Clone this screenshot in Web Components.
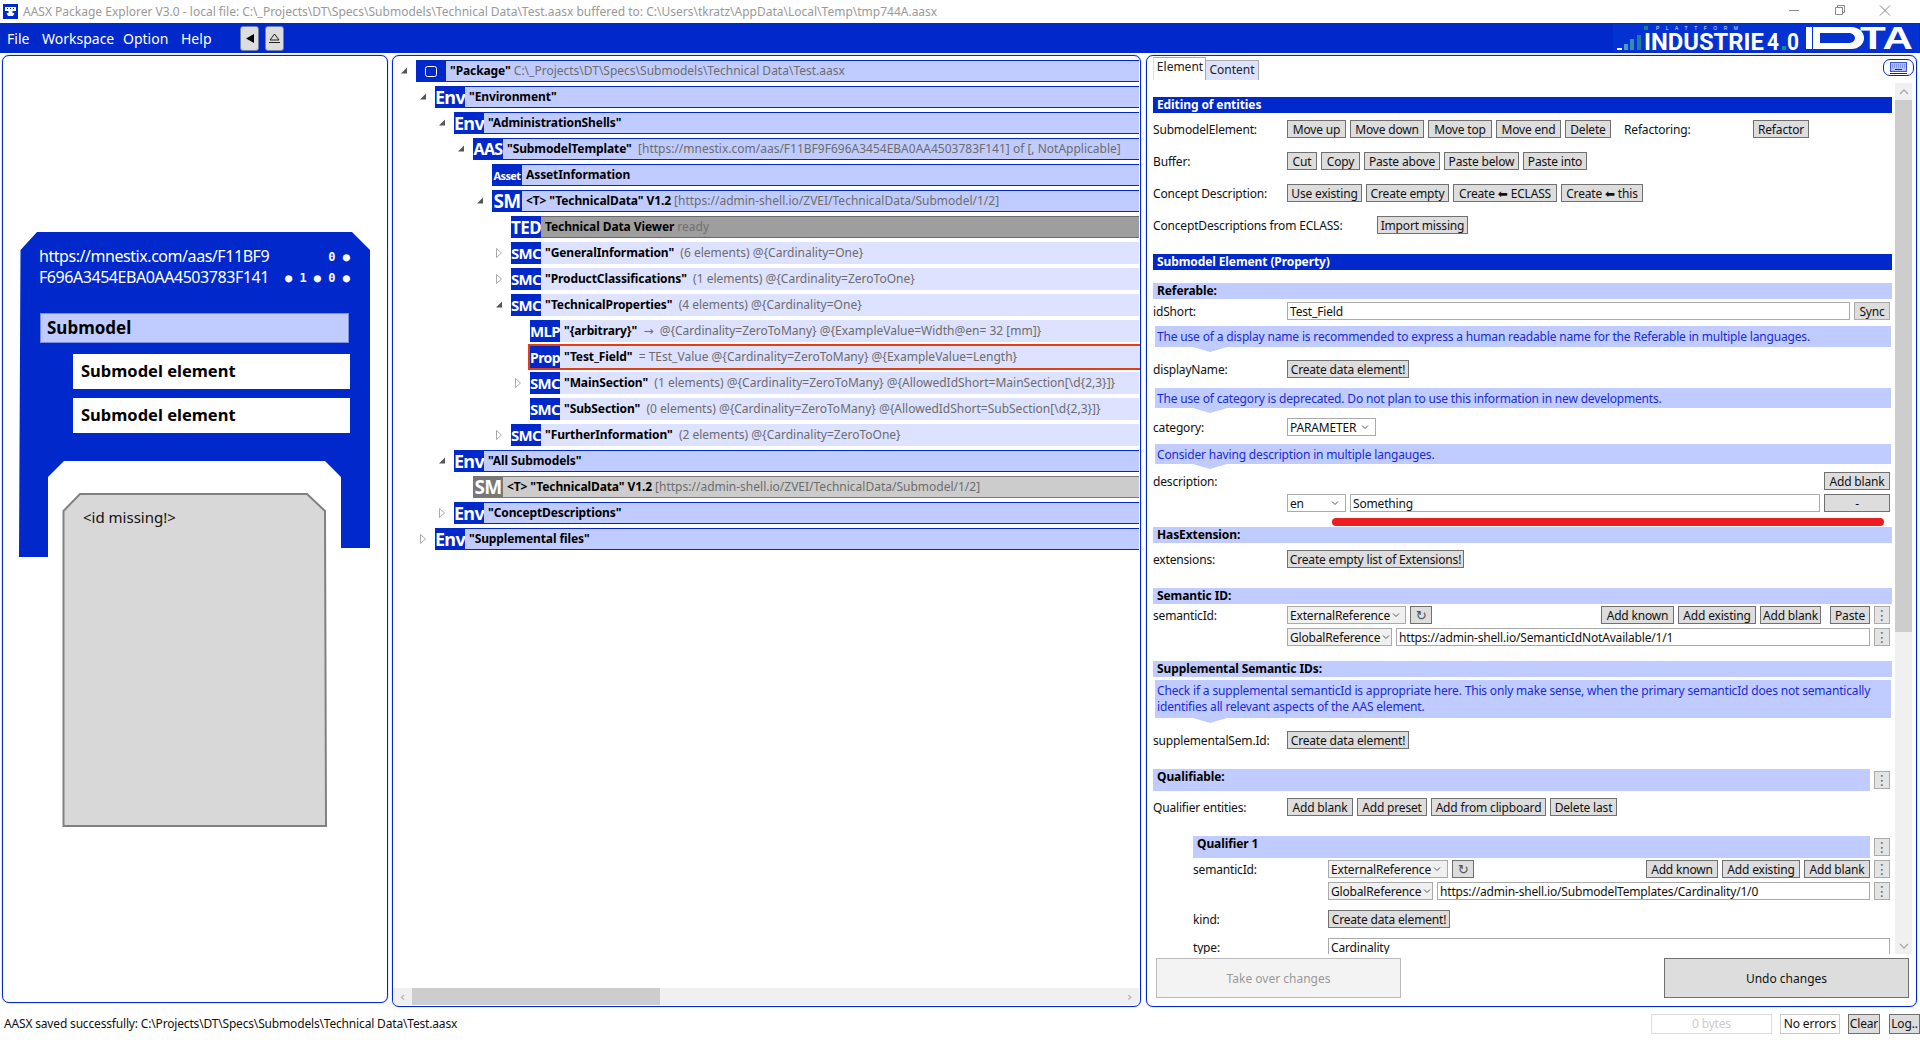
<!DOCTYPE html>
<html><head><meta charset="utf-8"><title>AASX Package Explorer</title>
<style>
html,body{margin:0;padding:0;height:1040px;overflow:hidden;background:#fff;}
body{font:12px "Noto Sans","DejaVu Sans",sans-serif;color:#111;}
</style></head><body>
<aas-app>
  <aas-titlebar slot="title">AASX Package Explorer V3.0 - local file: C:\_Projects\DT\Specs\Submodels\Technical Data\Test.aasx buffered to: C:\Users\tkratz\AppData\Local\Temp\tmp744A.aasx</aas-titlebar>
  <aas-menubar slot="menu"></aas-menubar>
  <aas-left slot="left"></aas-left>
  <aas-tree slot="mid">
    <tree-row level="0" icon="pkg" toggle="open"><b>"Package"</b> <span>C:\_Projects\DT\Specs\Submodels\Technical Data\Test.aasx</span></tree-row>
    <tree-row level="1" icon="Env" size="18" toggle="open"><b>"Environment"</b></tree-row>
    <tree-row level="2" icon="Env" size="18" toggle="open"><b>"AdministrationShells"</b></tree-row>
    <tree-row level="3" icon="AAS" size="16" toggle="open"><b>"SubmodelTemplate"</b> &nbsp;<span>[https://mnestix.com/aas/F11BF9F696A3454EBA0AA4503783F141] of [, NotApplicable]</span></tree-row>
    <tree-row level="4" icon="Asset" size="11"><b>AssetInformation</b></tree-row>
    <tree-row level="4" icon="SM" size="19" toggle="open"><b>&lt;T&gt; "TechnicalData" V1.2</b> <span>[https://admin-shell.io/ZVEI/TechnicalData/Submodel/1/2]</span></tree-row>
    <tree-row level="5" icon="TED" size="17" kind="gray"><b>Technical Data Viewer</b> <span>ready</span></tree-row>
    <tree-row level="5" icon="SMC" size="15" kind="light" toggle="closed"><b>"GeneralInformation"</b> &nbsp;<span>(6 elements) @{Cardinality=One}</span></tree-row>
    <tree-row level="5" icon="SMC" size="15" kind="light" toggle="closed"><b>"ProductClassifications"</b> &nbsp;<span>(1 elements) @{Cardinality=ZeroToOne}</span></tree-row>
    <tree-row level="5" icon="SMC" size="15" kind="light" toggle="open"><b>"TechnicalProperties"</b> &nbsp;<span>(4 elements) @{Cardinality=One}</span></tree-row>
    <tree-row level="6" icon="MLP" size="15" kind="light"><b>"{arbitrary}"</b> &nbsp;<span>→ &nbsp;@{Cardinality=ZeroToMany} @{ExampleValue=Width@en= 32 [mm]}</span></tree-row>
    <tree-row level="6" icon="Prop" size="14" kind="light" selected><b>"Test_Field"</b> &nbsp;<span>= TEst_Value @{Cardinality=ZeroToMany} @{ExampleValue=Length}</span></tree-row>
    <tree-row level="6" icon="SMC" size="15" kind="light" toggle="closed"><b>"MainSection"</b> &nbsp;<span>(1 elements) @{Cardinality=ZeroToMany} @{AllowedIdShort=MainSection[\d{2,3}]}</span></tree-row>
    <tree-row level="6" icon="SMC" size="15" kind="light"><b>"SubSection"</b> &nbsp;<span>(0 elements) @{Cardinality=ZeroToMany} @{AllowedIdShort=SubSection[\d{2,3}]}</span></tree-row>
    <tree-row level="5" icon="SMC" size="15" kind="light" toggle="closed"><b>"FurtherInformation"</b> &nbsp;<span>(2 elements) @{Cardinality=ZeroToOne}</span></tree-row>
    <tree-row level="2" icon="Env" size="18" toggle="open"><b>"All Submodels"</b></tree-row>
    <tree-row level="3" icon="SM" size="19" kind="graylight"><b>&lt;T&gt; "TechnicalData" V1.2</b> <span>[https://admin-shell.io/ZVEI/TechnicalData/Submodel/1/2]</span></tree-row>
    <tree-row level="2" icon="Env" size="18" toggle="closed"><b>"ConceptDescriptions"</b></tree-row>
    <tree-row level="1" icon="Env" size="18" toggle="closed"><b>"Supplemental files"</b></tree-row>
  </aas-tree>
  <aas-editor slot="right">
    <ed-head top="0">Editing of entities</ed-head>
    <ed-row top="7" label="SubmodelElement:"><ed-btn w="59">Move up</ed-btn><ed-btn w="74">Move down</ed-btn><ed-btn w="64">Move top</ed-btn><ed-btn w="65">Move end</ed-btn><ed-btn w="46">Delete</ed-btn><ed-text w="125" ml="9">Refactoring:</ed-text><ed-btn w="56">Refactor</ed-btn></ed-row>
    <ed-row top="14" label="Buffer:"><ed-btn w="30">Cut</ed-btn><ed-btn w="39">Copy</ed-btn><ed-btn w="76">Paste above</ed-btn><ed-btn w="75">Paste below</ed-btn><ed-btn w="64">Paste into</ed-btn></ed-row>
    <ed-row top="14" label="Concept Description:"><ed-btn w="75">Use existing</ed-btn><ed-btn w="83">Create empty</ed-btn><ed-btn w="104">Create ⬅ ECLASS</ed-btn><ed-btn w="82">Create ⬅ this</ed-btn></ed-row>
    <ed-row top="14" label="ConceptDescriptions from ECLASS:" lw="224"><ed-btn w="91">Import missing</ed-btn></ed-row>
    <ed-head top="20">Submodel Element (Property)</ed-head>
    <ed-head top="13" sub>Referable:</ed-head>
    <ed-row top="3" label="idShort:"><ed-field flex>Test_Field</ed-field><ed-btn w="36" light>Sync</ed-btn></ed-row>
    <ed-info top="6" h="21">The use of a display name is recommended to express a human readable name for the Referable in multiple languages.</ed-info>
    <ed-row top="13" label="displayName:"><ed-btn w="122">Create data element!</ed-btn></ed-row>
    <ed-info top="10" h="20">The use of category is deprecated. Do not plan to use this information in new developments.</ed-info>
    <ed-row top="10" label="category:"><ed-select w="89">PARAMETER</ed-select></ed-row>
    <ed-info top="8" h="20">Consider having description in multiple langauges.</ed-info>
    <ed-row top="8" label="description:"><ed-gap></ed-gap><ed-btn w="66">Add blank</ed-btn></ed-row>
    <ed-row top="4" label=""><ed-select w="59" between>en</ed-select><ed-field flex>Something</ed-field><ed-btn w="66">-</ed-btn></ed-row>
    <ed-head top="15" sub>HasExtension:</ed-head>
    <ed-row top="7" label="extensions:"><ed-btn w="177">Create empty list of Extensions!</ed-btn></ed-row>
    <ed-head top="20" sub>Semantic ID:</ed-head>
    <ed-row top="2" label="semanticId:"><ed-select w="119" gray>ExternalReference</ed-select><ed-btn w="22" glyph>↻</ed-btn><ed-gap></ed-gap><ed-btn w="73">Add known</ed-btn><ed-btn w="78">Add existing</ed-btn><ed-btn w="61">Add blank</ed-btn><ed-btn w="40" ml="5">Paste</ed-btn><ed-btn w="16" dots>⋮</ed-btn></ed-row>
    <ed-row top="4" label=""><ed-select w="105" gray>GlobalReference</ed-select><ed-field flex>https://admin-shell.io/SemanticIdNotAvailable/1/1</ed-field><ed-btn w="16" dots>⋮</ed-btn></ed-row>
    <ed-head top="15" sub>Supplemental Semantic IDs:</ed-head>
    <ed-info top="3" h="38">Check if a supplemental semanticId is appropriate here. This only make sense, when the primary semanticId does not semantically<br>identifies all relevant aspects of the AAS element.</ed-info>
    <ed-row top="13" label="supplementalSem.Id:"><ed-btn w="122">Create data element!</ed-btn></ed-row>
    <ed-row top="20" h="22"><ed-head sub flex h="22">Qualifiable:</ed-head><ed-btn w="16" dots>⋮</ed-btn></ed-row>
    <ed-row top="7" label="Qualifier entities:"><ed-btn w="66">Add blank</ed-btn><ed-btn w="70">Add preset</ed-btn><ed-btn w="115">Add from clipboard</ed-btn><ed-btn w="67">Delete last</ed-btn></ed-row>
    <ed-row top="20" h="22" indent="40"><ed-head sub flex h="22">Qualifier 1</ed-head><ed-btn w="16" dots>⋮</ed-btn></ed-row>
    <ed-row top="2" indent="40" lw="135" label="semanticId:"><ed-select w="120" gray>ExternalReference</ed-select><ed-btn w="22" glyph>↻</ed-btn><ed-gap></ed-gap><ed-btn w="72">Add known</ed-btn><ed-btn w="78">Add existing</ed-btn><ed-btn w="66">Add blank</ed-btn><ed-btn w="16" dots>⋮</ed-btn></ed-row>
    <ed-row top="4" indent="40" lw="135" label=""><ed-select w="105" gray>GlobalReference</ed-select><ed-field flex>https://admin-shell.io/SubmodelTemplates/Cardinality/1/0</ed-field><ed-btn w="16" dots>⋮</ed-btn></ed-row>
    <ed-row top="10" indent="40" lw="135" label="kind:"><ed-btn w="122">Create data element!</ed-btn></ed-row>
    <ed-row top="10" indent="40" lw="135" label="type:"><ed-field flex>Cardinality</ed-field></ed-row>
  </aas-editor>
  <aas-status slot="status"></aas-status>
</aas-app>
<script>
const BLUE='#0128CB';
function def(name,css,html,extra){
  customElements.define(name,class extends HTMLElement{
    constructor(){super();this.attachShadow({mode:'open'});this.shadowRoot.innerHTML='<style>'+css+'</style>'+(typeof html==='function'?'':html);}
    connectedCallback(){if(typeof html==='function'&&!this._d){this._d=1;this.shadowRoot.innerHTML+=html(this);}if(extra)extra(this);}
  });
}
const applyBox=e=>{
  const a=n=>e.getAttribute(n);
  if(a('w'))e.style.width=a('w')+'px';
  if(a('h'))e.style.height=a('h')+'px';
  if(a('top'))e.style.marginTop=a('top')+'px';
  if(a('ml'))e.style.marginLeft=a('ml')+'px';
};
def('aas-app',`
  :host{display:flex;flex-direction:column;width:1920px;height:1040px;overflow:hidden}
  .main{display:grid;grid-template-columns:386px 749px 772px;column-gap:4px;padding:2px 0 0 2px;height:952px;box-sizing:border-box}
  ::slotted([slot=right]){margin-left:1px}
  `,`<slot name="title"></slot><slot name="menu"></slot><div class="main"><slot name="left"></slot><slot name="mid"></slot><slot name="right"></slot></div><slot name="status"></slot>`);

def('aas-titlebar',`
  :host{display:flex;align-items:center;height:23px;color:#999;font-size:12px;white-space:nowrap;flex:none}
  svg{margin:0 5px 0 3px;flex:none}
  .ctl{margin-left:auto;display:flex;align-items:center}
  .ctl svg{margin:0;display:block}
  `,`<svg width="15" height="15" viewBox="0 0 15 15"><rect width="15" height="15" fill="${BLUE}"/><path d="M2 3h11v4H9.5v2h2l-1.5 3H5L3.500 9h2V7H2z" fill="#fff"/><path d="M4 4.500h1M7 4.500h1M10 4.500h1" stroke="${BLUE}"/></svg><slot></slot>
  <div class="ctl" ><svg width="130" height="23" viewBox="0 0 130 23" style="margin-right:10px"><path d="M9 10.500h10" stroke="#888"/><path d="M55.500 7.500h7v7h-7zM57.500 7.500v-2h7v7h-2" fill="none" stroke="#888"/><path d="M100 5.500l10 10M110 5.500l-10 10" stroke="#888"/></svg></div>`);

def('aas-menubar',`
  :host{display:flex;align-items:center;height:30px;background:${BLUE};color:#fff;font-size:14px;flex:none;position:relative}
  span{display:block}
  .b{width:19px;height:25px;box-sizing:border-box;background:#ddd;border:1px solid #6f7fb0;border-radius:3px;display:flex;align-items:center;justify-content:center;margin-right:6px}
  svg{display:block}
  aas-logo{margin-left:auto;margin-right:1px}
  `,`<span style="margin-left:7px;width:35px">File</span><span style="width:81px">Workspace</span><span style="width:58px">Option</span><span style="width:59px">Help</span>
  <div class="b"><svg width="8" height="9"><path d="M8 0v9L0 4.500z" fill="#000"/></svg></div>
  <div class="b"><svg width="11" height="11"><path d="M5.500 1L10 7H1z" fill="none" stroke="#222"/><path d="M0 9.500h11" stroke="#222"/></svg></div>
  <aas-logo></aas-logo>`);

def('aas-logo',`:host{display:block;height:28px}svg{display:block}`,
`<svg width="306" height="28" viewBox="0 0 306 28">
  <rect width="306" height="28" fill="#0432D2"/>
  <rect x="4" y="24" width="5" height="2" fill="#fff"/>
  <rect x="11" y="20" width="4" height="6" fill="#4f9ac0"/><rect x="17" y="15" width="4" height="11" fill="#2f8fb0"/><rect x="24" y="11" width="4" height="15" fill="#1a7f9c"/>
  <rect x="31" y="2" width="4" height="4" fill="#0f7f90"/>
  <text x="43" y="6" font-family="Liberation Sans" font-size="5" fill="#cfe0ff" letter-spacing="6.500">PLATTFORM</text>
  <text x="31" y="26" font-family="Roboto" font-weight="700" font-size="23" fill="#fff" textLength="120" lengthAdjust="spacingAndGlyphs">INDUSTRIE</text>
  <text x="154" y="26" font-family="Roboto" font-weight="700" font-size="23" fill="#fff" textLength="12" lengthAdjust="spacingAndGlyphs">4</text>
  <rect x="169" y="22" width="4" height="4" fill="#0f8f90"/>
  <text x="174" y="26" font-family="Roboto" font-weight="700" font-size="23" fill="#fff" textLength="12" lengthAdjust="spacingAndGlyphs">0</text>
  <rect x="193" y="3" width="6" height="22" fill="#fff"/>
  <path d="M200 3h38c8 0 13 5 13 11s-5 11-13 11h-38zM207 9v10h28c4 0 7-2 7-5s-3-5-7-5z" fill="#fff" fill-rule="evenodd"/>
  <text x="247" y="25" font-family="Liberation Sans" font-weight="700" font-size="31" fill="#fff" textLength="53" lengthAdjust="spacingAndGlyphs">TA</text>
</svg>`);

def('aas-left',`
  :host{display:block;height:948px;box-sizing:border-box;border:1px solid ${BLUE};border-radius:7px;box-shadow:0 0 1px ${BLUE};position:relative;overflow:hidden}
  svg.bg{position:absolute;left:-3px;top:-56px;}
  .card{position:relative;padding:191px 0 0 36px;}
  .id{display:flex;height:50px;color:#fff;font-size:16px;line-height:21px}
  .u{width:242px;white-space:nowrap;letter-spacing:-.45px;margin-top:-1px}
  .qr{font:bold 12px/21px "DejaVu Sans Mono","Liberation Mono",monospace;white-space:pre;text-align:right;width:70px;margin-left:-1px}
  .sm{margin:16px 0 0 1px;width:309px;height:30px;box-sizing:border-box;background:#C0CCFF;border:1px solid #7d8fe4;color:#000;font:bold 17px/27px "Noto Sans",sans-serif;padding-left:6px}
  .el{margin:11px 0 0 34px;width:277px;height:35px;box-sizing:border-box;background:#fff;color:#000;font:bold 16.500px/33px "Noto Sans",sans-serif;padding-left:8px}
  .el+.el{margin-top:9px}
  .missing{position:absolute;left:80px;top:451px;font-size:15px;color:#111}
  `,`<svg class="bg" width="388" height="1000"><path d="M37 232H352L370 250V548H341V477L325 461H64L48 477V557H19L20.500 250z" fill="${BLUE}"/><path d="M80 494H307L325 511L326 826H63.500V511z" fill="#D8D8D8" stroke="#808080" stroke-width="2"/></svg>
  <div class="card"><div class="id"><div class="u">https://mnestix.com/aas/F11BF9<br>F696A3454EBA0AA4503783F141</div><div class="qr">0 ●
● 1 ● 0 ●</div></div>
  <div class="sm">Submodel</div><div class="el">Submodel element</div><div class="el">Submodel element</div></div><div class="missing">&lt;id missing!&gt;</div>`);

def('aas-tree',`
  :host{display:flex;flex-direction:column;height:952px;box-sizing:border-box;border:1px solid ${BLUE};border-radius:7px;box-shadow:0 0 1px ${BLUE};overflow:hidden}
  .rows{flex:1;min-height:0;padding-top:4px;overflow:hidden}
  .sb{height:17px;flex:none;margin-bottom:1px;background:#f0f0f0;display:flex;align-items:center;margin-right:1px}
  .a{width:19px;flex:none;color:#aaa;font:13px "DejaVu Sans";text-align:center}
  .t{width:248px;height:17px;background:#cdcdcd}
  .sp{flex:1}
  `,`<div class="rows"><slot></slot></div><div class="sb"><div class="a">‹</div><div class="t"></div><div class="sp"></div><div class="a">›</div></div>`);

def('tree-row',`
  :host{display:flex;height:22px;margin-bottom:4px;white-space:nowrap;--bg:#C0CCFF;--bd:${BLUE};--ic:${BLUE}}
  :host([kind=light]){--bg:#DCE2FF;--bd:transparent}
  :host([kind=gray]){--bg:#9E9E9E;--bd:#6b6b6b}
  :host([kind=graylight]){--bg:#CCCCCC;--bd:#777;--ic:#777}
  .tg{width:16px;flex:none;display:block}
  .box{flex:1;display:flex;min-width:0;height:22px;margin-right:1px}
  :host([selected]) .box{box-shadow:0 0 0 2px #E04010;margin-right:-4px;position:relative;}
  .ic{width:30px;flex:none;background:var(--ic);color:#fff;font-weight:700;display:flex;align-items:center;justify-content:center;overflow:hidden;letter-spacing:-.6px}
  .tx{flex:1;box-sizing:border-box;background:var(--bg);border:1px solid var(--bd);border-left:0;border-right:0;line-height:20px;padding-left:4px;overflow:hidden;color:#000}
  :host([kind=light]) .tx{}
  ::slotted(span){color:#6c6c6c}
  :host([kind=gray]) ::slotted(span){color:#707070}
  ::slotted(b){font-weight:700;letter-spacing:-.1px}
  i{display:block;width:12px;height:11px;border:1.500px solid #fff;box-sizing:border-box;border-radius:2.500px}
  `,el=>{
    const t=el.getAttribute('toggle'),ic=el.getAttribute('icon'),s=el.getAttribute('size')||14;
    el.style.paddingLeft=(7+19*(+el.getAttribute('level')))+'px';
    const tg=t==='open'?'<path d="M1 13.500L7 7.500V13.500z" fill="#555"/>':t==='closed'?'<path d="M1.500 6.500L6.500 11L1.500 15.500z" fill="#fff" stroke="#aaa"/>':'';
    return `<svg class="tg" width="16" height="22">${tg}</svg><div class="box"><div class="ic" style="font-size:${s}px">${ic==='pkg'?'<i></i>':ic}</div><div class="tx"><slot></slot></div></div>`;
  });

def('aas-editor',`
  :host{display:flex;flex-direction:column;height:952px;box-sizing:border-box;border:1px solid ${BLUE};border-radius:7px;box-shadow:0 0 1px ${BLUE};position:relative;overflow:hidden}
  .tabs{display:flex;height:23px;margin:1px 0 0 6px;flex:none;align-items:flex-end}
  .tab{box-sizing:border-box;color:#222}
  .t1{width:53px;height:23px;border:1px solid #aaa;border-bottom:0;border-left-color:#ddd;background:#fff;line-height:18px;padding-left:1px;text-align:center}
  .t2{width:53px;height:20px;border:1px solid #aaa;border-left:0;border-bottom:0;background:#DCE2FF;line-height:18px;text-align:center}
  .kb{position:absolute;right:2px;top:3px;width:31px;height:17px;box-sizing:border-box;border:1px solid ${BLUE};border-radius:7px;display:flex;align-items:center;justify-content:center}
  .body{flex:none;height:871px;margin-top:3px;display:flex;overflow:hidden}
  .form{width:739px;margin-left:6px;padding-top:14px;box-sizing:border-box;position:relative;overflow:hidden}
  .red{position:absolute;left:179px;top:435px;width:552px;height:8px;border-radius:4px;background:#ED1C24;z-index:2}
  .sb{width:17px;margin-left:3px;background:#f0f0f0;display:flex;flex-direction:column}
  .a{height:17px;flex:none;display:flex;align-items:center;justify-content:center}
  .th{height:532px;background:#cdcdcd}
  .sp{flex:1}
  .foot{display:flex;justify-content:space-between;margin:4px 7px 0 9px}
  .big{width:245px;height:40px;box-sizing:border-box;display:flex;align-items:center;justify-content:center;border:1px solid #707070;background:#DDD;color:#111}
  .off{border-color:#bbb;background:#F3F3F3;color:#999}
  `,`<div class="tabs"><div class="tab t1">Element</div><div class="tab t2">Content</div></div>
  <div class="kb"><svg width="17" height="12" viewBox="0 0 17 12"><rect x=".5" y=".5" width="16" height="9" fill="#B4C0F5" stroke="#3a56d8"/><path d="M2 3h13M2 5h13" stroke="#5a6fd8" stroke-dasharray="1 1"/><path d="M5 7.500h7M0 11.500h17" stroke="${BLUE}"/></svg></div>
  <div class="body"><div class="form"><div class="red"></div><slot></slot></div>
  <div class="sb"><div class="a"><svg width="10" height="6"><path d="M1 5l4-4 4 4" fill="none" stroke="#aaa" stroke-width="1.300"/></svg></div><div class="th"></div><div class="sp"></div><div class="a"><svg width="10" height="6"><path d="M1 1l4 4 4-4" fill="none" stroke="#aaa" stroke-width="1.300"/></svg></div></div></div>
  <div class="foot"><div class="big off">Take over changes</div><div class="big">Undo changes</div></div>`);

def('ed-head',`
  :host{display:block;height:16px;background:${BLUE};color:#fff;font-weight:700;line-height:16px;padding-left:4px;letter-spacing:-.1px;box-sizing:border-box;margin-right:-1px}
  :host([sub]){background:#C0CCFF;color:#000}
  :host([flex]){flex:1;margin-right:0}
  `,`<slot></slot>`,applyBox);

def('ed-info',`
  :host{display:block;position:relative;margin:0 1px 0 2px;background:#C0CCFF;color:#1A2BD8;line-height:16px;padding:3px 0 0 2px;box-sizing:border-box;letter-spacing:-.17px}
  :host::after{content:"";position:absolute;left:38px;top:100%;width:34px;height:5px;background:#C0CCFF;clip-path:polygon(0 0,100% 0,50% 100%)}
  `,`<slot></slot>`,applyBox);

def('ed-row',`
  :host{display:flex;align-items:center;height:18px;gap:4px;padding-right:2px;white-space:nowrap}
  .l{flex:none;color:#111;margin-right:-4px;letter-spacing:-.17px}
  `,el=>{
    const lab=el.getAttribute('label');
    const w=+(el.getAttribute('lw')||134);
    return lab===null?`<slot></slot>`:`<div class="l" style="width:${w}px">${lab}</div><slot></slot>`;
  },el=>{applyBox(el);if(el.getAttribute('indent'))el.style.paddingLeft=el.getAttribute('indent')+'px';});

def('ed-gap',`:host{display:block;flex:1}`,``);
def('ed-text',`:host{display:block;color:#111;flex:none;letter-spacing:-.17px}`,`<slot></slot>`,applyBox);

def('ed-btn',`
  :host{display:flex;align-items:center;justify-content:center;flex:none;height:18px;box-sizing:border-box;background:#DDD;border:1px solid #707070;color:#111;white-space:nowrap;letter-spacing:-.17px;overflow:hidden}
  :host([dots]){border-color:#aaa;color:#666;font:14px "DejaVu Sans",sans-serif;background:#E4E4E4}
  :host([glyph]){font:13px "DejaVu Sans",sans-serif;color:#555}
  :host([light]){border-color:#aaa}
  `,`<slot></slot>`,applyBox);

def('ed-field',`
  :host{display:flex;align-items:center;flex:1;min-width:0;height:18px;box-sizing:border-box;background:#fff;border:1px solid #aaa;padding-left:2px;color:#111;letter-spacing:-.17px;overflow:hidden}
  `,`<slot></slot>`);

def('ed-select',`
  :host{display:flex;align-items:center;flex:none;height:18px;box-sizing:border-box;background:#fff;border:1px solid #aaa;padding:0 6px 0 2px;color:#111;letter-spacing:-.17px;justify-content:space-between;white-space:nowrap}
  :host([gray]){background:#F0F0F0}
  svg{flex:none;margin-left:2px}
  `,`<span><slot></slot></span><svg width="8" height="5"><path d="M1 .5l3 3 3-3" fill="none" stroke="#555"/></svg>`,applyBox);

def('aas-status',`
  :host{display:flex;align-items:center;height:33px;padding:7px 0 3px 4px;box-sizing:border-box;flex:none;letter-spacing:-.17px;color:#111;white-space:nowrap}
  .sp{flex:1}
  .b{height:20px;box-sizing:border-box;display:flex;align-items:center;justify-content:center;border:1px solid #ccc;margin-left:8px}
  .z{width:121px;color:#ccc;border-color:#ddd}
  .n{width:60px}
  .c{width:32px;background:#DDD;border-color:#707070}
  .g{width:31px;background:#DDD;border-color:#707070;margin-left:9px}
  `,`<div>AASX saved successfully: C:\\Projects\\DT\\Specs\\Submodels\\Technical Data\\Test.aasx</div><div class="sp"></div><div class="b z">0 bytes</div><div class="b n">No errors</div><div class="b c">Clear</div><div class="b g">Log..</div>`);
</script>
</body></html>
